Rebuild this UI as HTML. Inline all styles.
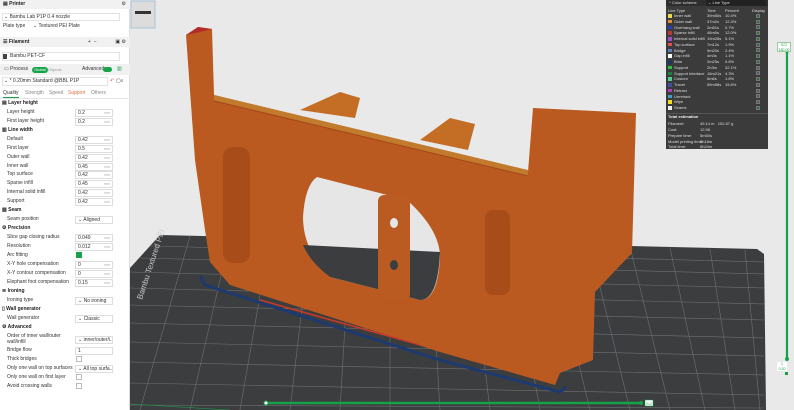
<!DOCTYPE html>
<html><head><meta charset="utf-8"><style>
*{margin:0;padding:0;box-sizing:border-box}
body{width:794px;height:410px;overflow:hidden;background:#e9e9e9;font-family:"Liberation Sans",sans-serif;position:relative}
#lp{position:absolute;left:0;top:0;width:130px;height:410px;background:#fff;border-right:1px solid #ddd;font-size:5px;color:#333}
.r{position:absolute;left:0;width:130px;height:9px;line-height:9px;white-space:nowrap}
.r .l{position:absolute;left:7px}
.r .v{position:absolute;left:75px;top:0.5px;width:38px;height:8px;border:1px solid #ddd;line-height:6px;padding-left:2px;font-size:5px;overflow:hidden;white-space:nowrap}
.r .v i{position:absolute;right:2px;font-style:normal;color:#aaa;font-size:3.5px}
.h{position:absolute;left:2px;font-weight:bold;font-size:5px;color:#222}
.bar{position:absolute;left:0;width:130px;background:#f1f1f1}
.cb{position:absolute;left:76px;top:1px;width:6px;height:6px;border:1px solid #bbb}
#cs{position:absolute;left:666px;top:0;width:102px;height:149px;background:#3b3b3b;color:#ddd;font-size:4px}
#cs .row{position:absolute;left:2px;width:98px;height:5.75px;line-height:5.75px;white-space:nowrap}
#cs .sq{position:absolute;left:0;top:1.2px;width:3.5px;height:3.5px}
#cs .n{position:absolute;left:6px}
#cs .t{position:absolute;left:39px}
#cs .p{position:absolute;left:57px}
#cs .d{position:absolute;left:88px;top:0.8px;width:4px;height:4px;background:#5a5a5a;border:0.5px solid #777}
#cs .d.on{background:#2f6e3a}
</style></head><body>

<svg width="794" height="410" style="position:absolute;left:0;top:0">
<polygon points="160,235 757,249 764,254 766,410 130,410 130,268" fill="#3c3d3e"/>
<g stroke="#7b7d80" stroke-width="0.6" opacity="0.8">
<line x1="150" y1="246" x2="764" y2="262"/><line x1="140" y1="258" x2="764" y2="274"/><line x1="130" y1="272" x2="764" y2="288"/>
<line x1="130" y1="288" x2="764" y2="304"/><line x1="130" y1="305" x2="764" y2="320"/><line x1="130" y1="323" x2="764" y2="338"/>
<line x1="130" y1="342" x2="764" y2="356"/><line x1="130" y1="362" x2="764" y2="375"/><line x1="130" y1="383" x2="764" y2="395"/>
<line x1="130" y1="405" x2="764" y2="408"/>
<line x1="190" y1="236" x2="140" y2="410"/><line x1="230" y1="237" x2="190" y2="410"/><line x1="270" y1="238" x2="240" y2="410"/>
<line x1="310" y1="239" x2="290" y2="410"/><line x1="350" y1="240" x2="340" y2="410"/><line x1="390" y1="241" x2="390" y2="410"/>
<line x1="430" y1="242" x2="440" y2="410"/><line x1="470" y1="243" x2="490" y2="410"/><line x1="510" y1="244" x2="540" y2="410"/>
<line x1="550" y1="245" x2="590" y2="410"/><line x1="590" y1="246" x2="630" y2="410"/><line x1="630" y1="247" x2="670" y2="410"/>
<line x1="670" y1="248" x2="705" y2="410"/><line x1="710" y1="249" x2="735" y2="410"/><line x1="745" y1="250" x2="760" y2="410"/>
</g>
<text x="142" y="300" fill="#c8c8c8" font-size="8" transform="rotate(-72 142 300)" font-family="Liberation Sans">Bambu Textured PEI</text>
<path d="M200,276 L205,285 L440,360 L560,392 L566,387" stroke="#1d3a70" stroke-width="3" fill="none"/>
<polygon points="186,35 198,27 212,29 214,95 528,172 533,108 636,113 632,253 595,292 593,360 560,373 555,385 440,352 230,285 210,262 205,230 195,160" fill="#bb5a20"/>
<polygon points="214,95 528,170 528,176 214,101" fill="#c27a2c"/>
<polygon points="300,110 340,92 360,98 355,118" fill="#c36d25"/>
<polygon points="420,140 450,118 475,124 468,150" fill="#c36d25"/>
<polygon points="186,35 198,27 212,29 200,32" fill="#b22a2a"/>
<path d="M317,177 L407,200 Q440,230 440,257 Q438,300 420,300 L330,277 Q303,250 303,217 Q305,185 317,177Z" fill="#e6e6e6"/>
<path d="M303,245 L440,252 Q438,300 420,300 L330,277 Q310,262 303,245Z" fill="#3c3d3e"/>
<rect x="378" y="195" width="32" height="105" rx="6" fill="#ba5b22"/>
<ellipse cx="394" cy="223" rx="4" ry="5" fill="#e6e6e6"/><ellipse cx="394" cy="265" rx="4" ry="5" fill="#3c3d3e"/>
<rect x="223" y="147" width="27" height="116" rx="10" fill="#a84d1a"/>
<rect x="485" y="210" width="25" height="85" rx="8" fill="#a84d1a"/>
<line x1="214" y1="101" x2="528" y2="176" stroke="#a4451a" stroke-width="1"/>
<line x1="260" y1="300" x2="420" y2="345" stroke="#c73a2a" stroke-width="1.5"/>
<rect x="131" y="1" width="24" height="27" fill="#dcdcdc" stroke="#a9c3dc"/>
<rect x="135" y="11" width="16" height="3" fill="#333"/>
<line x1="787" y1="50" x2="787" y2="359" stroke="#15a24a" stroke-width="2.2"/>
<circle cx="787" cy="51" r="2" fill="#15a24a"/><circle cx="787" cy="359" r="2" fill="#15a24a"/>
<rect x="785" y="372" width="3" height="3" fill="#15a24a"/>
<line x1="265" y1="403" x2="641" y2="403" stroke="#15a24a" stroke-width="2.5"/>
<circle cx="266" cy="403" r="2" fill="#fff" stroke="#15a24a"/><circle cx="641" cy="403" r="2" fill="#15a24a"/>
<rect x="645" y="400" width="8" height="6" fill="#fff" stroke="#15a24a" stroke-width="0.5"/>
<text x="646" y="405" font-size="3.5" fill="#15a24a">212</text>
<line x1="130" y1="404" x2="230" y2="410" stroke="#15a24a" stroke-width="0.6"/>
</svg>
<div style="position:absolute;left:777px;top:42px;width:14px;height:10px;background:#fff;border:0.5px solid #9c9;font-size:3.5px;color:#15a24a;text-align:center;line-height:4.5px">572<br>180.00</div>
<div style="position:absolute;left:777px;top:362px;width:10px;height:9px;background:#fff;font-size:3.5px;color:#15a24a;text-align:center;line-height:4.5px">1<br>0.20</div>

<div id="lp">
<div class="bar" style="top:0;height:9px"></div>
<div class="r" style="top:0"><span class="h" style="left:3px">▤ Printer</span><span style="position:absolute;right:4px">⚙</span></div>
<div class="r" style="top:13px"><span style="position:absolute;left:2px;width:118px;height:8px;border:1px solid #e2e2e2;top:0"></span><span class="l" style="left:4px">⌄ Bambu Lab P1P 0.4 nozzle</span></div>
<div class="r" style="top:22px"><span class="l" style="left:3px">Plate type</span><span class="l" style="left:33px">⌄ Textured PEI Plate</span></div>
<div class="bar" style="top:37px;height:10px"></div>
<div class="r" style="top:38px"><span class="h" style="left:3px">☰ Filament</span><span style="position:absolute;left:88px">+ &nbsp;−</span><span style="position:absolute;right:4px">▣ ⚙</span></div>
<div class="r" style="top:52px"><span style="position:absolute;left:2px;width:118px;height:9px;border:1px solid #e2e2e2;top:0"></span><span style="position:absolute;left:3px;top:2px;width:4px;height:5px;background:#444"></span><span class="l" style="left:10px">Bambu PET-CF</span></div>
<div class="bar" style="top:64px;height:11px"></div>
<div class="r" style="top:65px"><span class="l" style="left:4px">▭ Process</span><span style="position:absolute;left:32px;top:2px;width:16px;height:6px;background:#16a34a;border-radius:3px;color:#fff;font-size:4px;line-height:6px;text-align:center">Global</span><span style="position:absolute;left:48px;top:2px;font-size:4px;color:#999;line-height:6px">Objects</span><span class="l" style="left:82px">Advanced</span><span style="position:absolute;left:103px;top:2px;width:9px;height:5px;background:#16a34a;border-radius:3px"></span><span style="position:absolute;left:117px;color:#16a34a">▥</span></div>
<div class="r" style="top:77px"><span style="position:absolute;left:2px;width:106px;height:9px;border:1px solid #e2e2e2;top:0"></span><span class="l" style="left:4px">⌄ * 0.20mm Standard @BBL P1P</span><span style="position:absolute;left:110px;color:#e06030">↶</span><span style="position:absolute;left:116px">▢⌕</span></div>
<div class="r" style="top:89px"><span class="l" style="left:3px;border-bottom:1px solid #16a34a;line-height:8px">Quality</span><span class="l" style="left:25px;color:#888">Strength</span><span class="l" style="left:49px;color:#888">Speed</span><span class="l" style="left:68px;color:#e07040">Support</span><span class="l" style="left:91px;color:#888">Others</span></div>
<div style="position:absolute;left:0;top:98px;width:130px;border-top:1px solid #e5e5e5"></div>

<div class="r" style="top:99px"><span class="h">▤ Layer height</span></div>
<div class="r" style="top:108px"><span class="l">Layer height</span><span class="v">0.2<i>mm</i></span></div>
<div class="r" style="top:117px"><span class="l">First layer height</span><span class="v">0.2<i>mm</i></span></div>
<div class="r" style="top:126px"><span class="h">▥ Line width</span></div>
<div class="r" style="top:135px"><span class="l">Default</span><span class="v">0.42<i>mm</i></span></div>
<div class="r" style="top:144px"><span class="l">First layer</span><span class="v">0.5<i>mm</i></span></div>
<div class="r" style="top:153px"><span class="l">Outer wall</span><span class="v">0.42<i>mm</i></span></div>
<div class="r" style="top:162px"><span class="l">Inner wall</span><span class="v">0.45<i>mm</i></span></div>
<div class="r" style="top:170px"><span class="l">Top surface</span><span class="v">0.42<i>mm</i></span></div>
<div class="r" style="top:179px"><span class="l">Sparse infill</span><span class="v">0.45<i>mm</i></span></div>
<div class="r" style="top:188px"><span class="l">Internal solid infill</span><span class="v">0.42<i>mm</i></span></div>
<div class="r" style="top:197px"><span class="l">Support</span><span class="v">0.42<i>mm</i></span></div>
<div class="r" style="top:206px"><span class="h">▧ Seam</span></div>
<div class="r" style="top:215px"><span class="l">Seam position</span><span class="v">⌄ Aligned</span></div>
<div class="r" style="top:224px"><span class="h">⚙ Precision</span></div>
<div class="r" style="top:233px"><span class="l">Slice gap closing radius</span><span class="v">0.049<i>mm</i></span></div>
<div class="r" style="top:242px"><span class="l">Resolution</span><span class="v">0.012<i>mm</i></span></div>
<div class="r" style="top:251px"><span class="l">Arc fitting</span><span class="cb" style="background:#16a34a;border-color:#16a34a"></span></div>
<div class="r" style="top:260px"><span class="l">X-Y hole compensation</span><span class="v">0<i>mm</i></span></div>
<div class="r" style="top:269px"><span class="l">X-Y contour compensation</span><span class="v">0<i>mm</i></span></div>
<div class="r" style="top:278px"><span class="l">Elephant foot compensation</span><span class="v">0.15<i>mm</i></span></div>
<div class="r" style="top:287px"><span class="h">≋ Ironing</span></div>
<div class="r" style="top:296px"><span class="l">Ironing type</span><span class="v">⌄ No ironing</span></div>
<div class="r" style="top:305px"><span class="h">▯ Wall generator</span></div>
<div class="r" style="top:314px"><span class="l">Wall generator</span><span class="v">⌄ Classic</span></div>
<div class="r" style="top:323px"><span class="h">⚙ Advanced</span></div>
<div class="r" style="top:333px;height:14px"><span class="l" style="line-height:6px">Order of inner wall/outer<br>wall/infill</span><span class="v" style="top:3px">⌄ inner/outer/i...</span></div>
<div class="r" style="top:346px"><span class="l">Bridge flow</span><span class="v">1</span></div>
<div class="r" style="top:355px"><span class="l">Thick bridges</span><span class="cb"></span></div>
<div class="r" style="top:364px"><span class="l">Only one wall on top surfaces</span><span class="v">⌄ All top surfa...</span></div>
<div class="r" style="top:373px"><span class="l">Only one wall on first layer</span><span class="cb"></span></div>
<div class="r" style="top:382px"><span class="l">Avoid crossing walls</span><span class="cb"></span></div>
</div>

<div id="cs">
<div class="row" style="top:0;height:6px;line-height:6px;background:#2e2e2e;width:102px;left:0"><span class="n" style="left:3px">^ Color scheme</span><span class="t" style="left:40px;width:60px;background:#222;padding-left:2px">⌄ Line Type</span></div>
<div class="row" style="top:7.5px"><span class="n" style="left:0">Line Type</span><span class="t">Time</span><span class="p">Percent</span><span style="position:absolute;left:84px">Display</span></div>
<div class="row" style="top:13px"><span class="sq" style="background:#e8d84a"></span><span class="n">Inner wall</span><span class="t">39m50s</span><span class="p">10.4%</span><span class="d on"></span></div>
<div class="row" style="top:18.75px"><span class="sq" style="background:#e88a3a"></span><span class="n">Outer wall</span><span class="t">47m2s</span><span class="p">12.3%</span><span class="d on"></span></div>
<div class="row" style="top:24.5px"><span class="sq" style="background:#2a3cc8"></span><span class="n">Overhang wall</span><span class="t">2m51s</span><span class="p">0.7%</span><span class="d on"></span></div>
<div class="row" style="top:30.25px"><span class="sq" style="background:#b83a3a"></span><span class="n">Sparse infill</span><span class="t">46m0s</span><span class="p">12.0%</span><span class="d on"></span></div>
<div class="row" style="top:36px"><span class="sq" style="background:#a050c8"></span><span class="n">Internal solid infill</span><span class="t">19m28s</span><span class="p">5.1%</span><span class="d on"></span></div>
<div class="row" style="top:41.75px"><span class="sq" style="background:#e05050"></span><span class="n">Top surface</span><span class="t">7m12s</span><span class="p">1.9%</span><span class="d on"></span></div>
<div class="row" style="top:47.5px"><span class="sq" style="background:#5a80c0"></span><span class="n">Bridge</span><span class="t">9m20s</span><span class="p">2.4%</span><span class="d on"></span></div>
<div class="row" style="top:53.25px"><span class="sq" style="background:#fff"></span><span class="n">Gap infill</span><span class="t">4m3s</span><span class="p">1.1%</span><span class="d on"></span></div>
<div class="row" style="top:59px"><span class="sq" style="background:#1a3a60"></span><span class="n">Brim</span><span class="t">2m25s</span><span class="p">0.6%</span><span class="d on"></span></div>
<div class="row" style="top:64.75px"><span class="sq" style="background:#2ac040"></span><span class="n">Support</span><span class="t">2h3m</span><span class="p">32.1%</span><span class="d"></span></div>
<div class="row" style="top:70.5px"><span class="sq" style="background:#208040"></span><span class="n">Support interface</span><span class="t">16m21s</span><span class="p">4.3%</span><span class="d"></span></div>
<div class="row" style="top:76.25px"><span class="sq" style="background:#50d090"></span><span class="n">Custom</span><span class="t">6m6s</span><span class="p">1.6%</span><span class="d on"></span></div>
<div class="row" style="top:82px"><span class="sq" style="background:#4050a0"></span><span class="n">Travel</span><span class="t">59m58s</span><span class="p">15.6%</span><span class="d"></span></div>
<div class="row" style="top:87.75px"><span class="sq" style="background:#b040c0"></span><span class="n">Retract</span><span class="d"></span></div>
<div class="row" style="top:93.5px"><span class="sq" style="background:#40a0c0"></span><span class="n">Unretract</span><span class="d"></span></div>
<div class="row" style="top:99.25px"><span class="sq" style="background:#f0e020"></span><span class="n">Wipe</span><span class="d"></span></div>
<div class="row" style="top:105px"><span class="sq" style="background:#eee"></span><span class="n">Seams</span><span class="d on"></span></div>
<div style="position:absolute;left:0;top:113px;width:102px;border-top:0.5px solid #555"></div>
<div class="row" style="top:114px;font-weight:bold;color:#eee"><span class="n" style="left:0">Total estimation</span></div>
<div class="row" style="top:120.5px"><span class="n" style="left:0">Filament:</span><span class="t" style="left:32px">49.14 m &nbsp; 152.67 g</span></div>
<div class="row" style="top:126.5px"><span class="n" style="left:0">Cost:</span><span class="t" style="left:32px">12.96</span></div>
<div class="row" style="top:132.5px"><span class="n" style="left:0">Prepare time:</span><span class="t" style="left:32px">5m50s</span></div>
<div class="row" style="top:138.5px"><span class="n" style="left:0">Model printing time:</span><span class="t" style="left:32px">6h18m</span></div>
<div class="row" style="top:143.5px"><span class="n" style="left:0">Total time:</span><span class="t" style="left:32px">6h24m</span></div>
</div>
</body></html>
